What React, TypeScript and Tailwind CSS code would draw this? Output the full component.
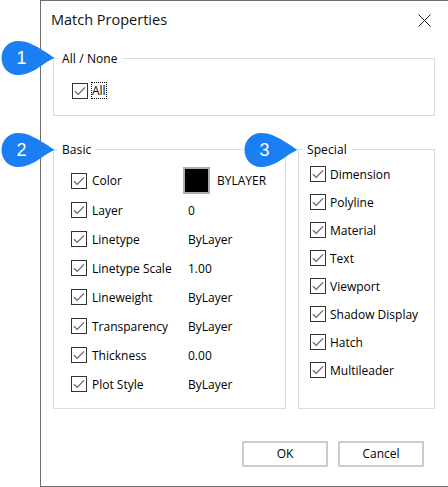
function Check({ className = "" }: { className?: string }) {
  return (
    <span className={"flex h-4 w-4 shrink-0 items-center justify-center border border-[#333333] bg-white " + className}>
      <svg width="12" height="10" viewBox="0 0 12 10" fill="none">
        <path d="M1 5.2 L4.2 8.4 L11 1.4" stroke="#666666" strokeWidth="1.3" />
      </svg>
    </span>
  );
}

function Group({ title, className, children }: { title: string; className: string; children: React.ReactNode }) {
  return (
    <div className={"relative border border-[#dcdcdc] " + className}>
      <span className="absolute left-[4px] top-[-9px] bg-white px-1 text-[12px] leading-[18px] tracking-[0.1px]">{title}</span>
      {children}
    </div>
  );
}

function Callout({ n, className }: { n: string; className: string }) {
  return (
    <div className={"absolute h-[34px] w-[54px] " + className}>
      <svg width="54" height="34" viewBox="0 0 54 34" className="absolute left-0 top-0">
        <path d="M17 0 C27 0 35 5 43 10 C46 12 50 14.5 53.5 17 C50 18.5 46 20.5 43 23 C35 28.5 27 34 17 34 C7 34 0.5 26 0.5 17 C0.5 8 7 0 17 0 Z" fill="#1a7ff2" />
      </svg>
      <span className="absolute left-0 top-0 flex h-[34px] w-[41px] items-center justify-center text-[18px] text-white [font-family:'Liberation_Sans',sans-serif]">{n}</span>
    </div>
  );
}

const basic: [string, string][] = [
  ["Layer", "0"],
  ["Linetype", "ByLayer"],
  ["Linetype Scale", "1.00"],
  ["Lineweight", "ByLayer"],
  ["Transparency", "ByLayer"],
  ["Thickness", "0.00"],
  ["Plot Style", "ByLayer"],
];
const special = ["Dimension", "Polyline", "Material", "Text", "Viewport", "Shadow Display", "Hatch", "Multileader"];

export default function App() {
  return (
    <div className="relative h-[487px] w-[448px] overflow-hidden bg-white pl-10 text-[12px] text-black [font-family:'Open_Sans',sans-serif]">
      <div className="flex h-[487px] w-[408px] flex-col border border-r-0 border-[#6e6e6e] bg-white">
        <div className="flex h-[38px] items-center justify-between pl-[10px] pr-[17px]">
          <span className="text-[14.5px] text-[#111111]">Match Properties</span>
          <svg width="13" height="13" viewBox="0 0 13 13" fill="none">
            <path d="M0.5 0.5 L12.5 12.5 M12.5 0.5 L0.5 12.5" stroke="#222222" strokeWidth="1" />
          </svg>
        </div>

        <div className="mt-[19px] pl-3 pr-[12px]">
          <Group title="All / None" className="flex h-[58px] w-[382px] items-start pl-[18px] pt-[24px]">
            <Check />
            <span className="ml-[3px] mt-[-1px] border border-dotted border-black px-0 leading-[15px]">All</span>
          </Group>
        </div>

        <div className="mt-[33px] flex gap-3 pl-3">
          <Group title="Basic" className="h-[260px] w-[233px] pl-[17px] pt-[22px]">
            <div className="flex h-[17px] items-center">
              <Check />
              <span className="ml-[5px] w-[91px] leading-4">Color</span>
              <span className="h-[27px] w-[27px] shrink-0 border-2 border-[#adadad] bg-black outline outline-1 outline-white" />
              <span className="ml-[7px] leading-4">BYLAYER</span>
            </div>
            <div className="mt-[12px] flex flex-col gap-[12px]">
              {basic.map(([k, v]) => (
                <div key={k} className="flex h-[17px] items-center">
                  <Check />
                  <span className="ml-[5px] mt-[2px] w-[96px] whitespace-nowrap leading-4">{k}</span>
                  <span className="mt-[2px] leading-4">{v}</span>
                </div>
              ))}
            </div>
          </Group>
          <Group title="Special" className="h-[260px] w-[137px] pl-[11px] pt-[16px]">
            <div className="flex flex-col gap-[12px]">
              {special.map((s) => (
                <div key={s} className="flex h-4 items-center">
                  <Check />
                  <span className="ml-[4px] mt-[2px] whitespace-nowrap leading-4">{s}</span>
                </div>
              ))}
            </div>
          </Group>
        </div>

        <div className="mt-[32px] flex gap-[10px] pl-[201px]">
          <button className="h-[26px] w-[86px] border-2 border-[#cccccc] bg-white text-[12px] leading-none">OK</button>
          <button className="h-[26px] w-[86px] border-2 border-[#cccccc] bg-white text-[12px] leading-none">Cancel</button>
        </div>
      </div>

      <Callout n="1" className="left-px top-[41px]" />
      <Callout n="2" className="left-px top-[133px]" />
      <Callout n="3" className="left-[244px] top-[133px]" />
    </div>
  );
}
